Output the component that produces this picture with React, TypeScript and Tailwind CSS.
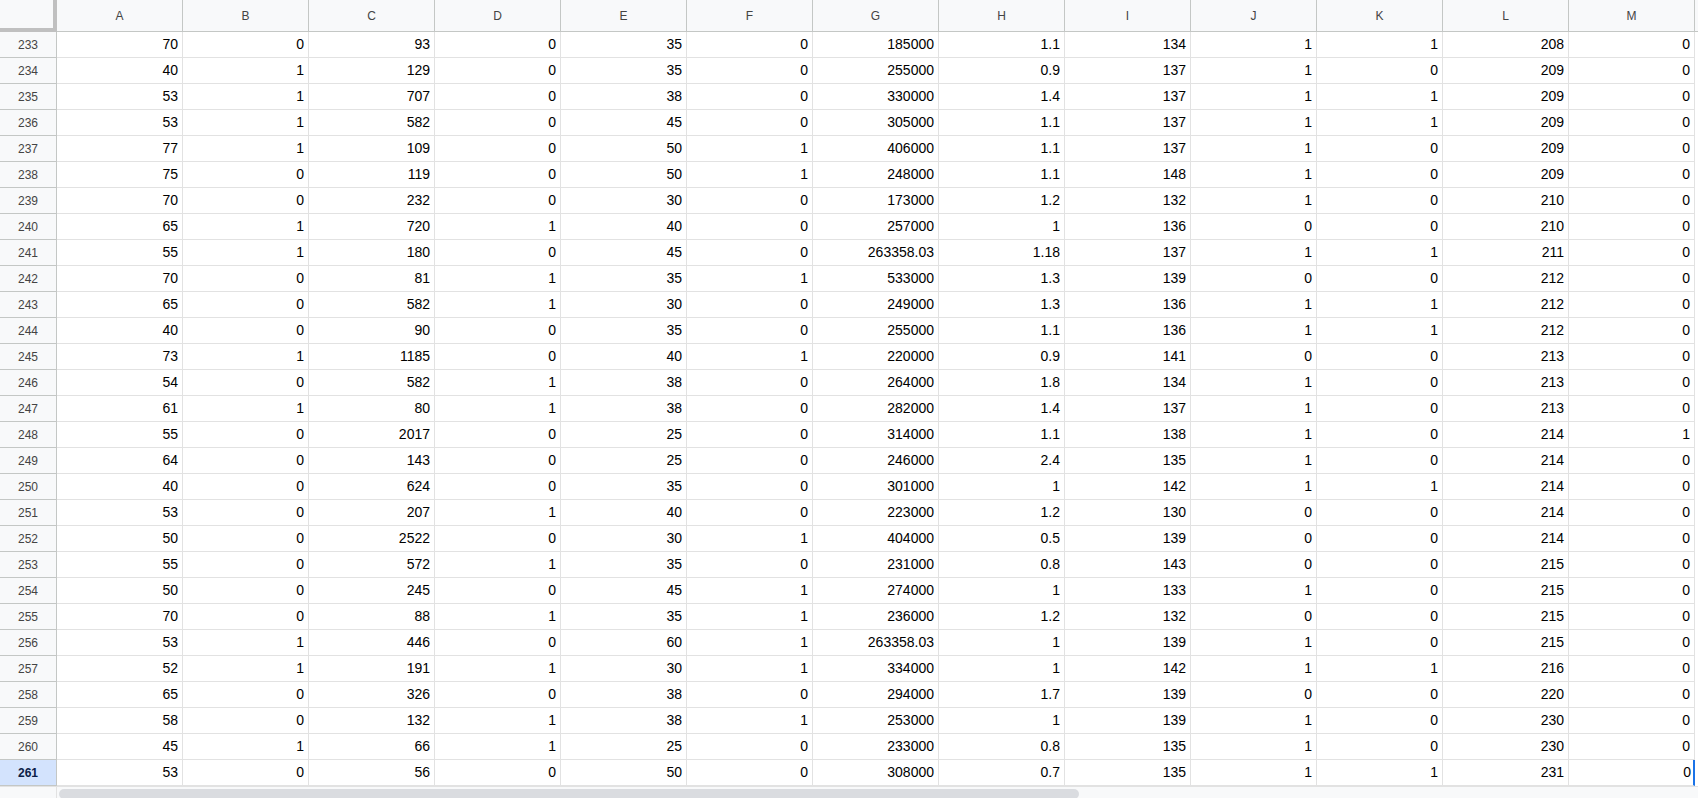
const cols = ['A', 'B', 'C', 'D', 'E', 'F', 'G', 'H', 'I', 'J', 'K', 'L', 'M'];

const data: string[] = [
  '70 0 93 0 35 0 185000 1.1 134 1 1 208 0',
  '40 1 129 0 35 0 255000 0.9 137 1 0 209 0',
  '53 1 707 0 38 0 330000 1.4 137 1 1 209 0',
  '53 1 582 0 45 0 305000 1.1 137 1 1 209 0',
  '77 1 109 0 50 1 406000 1.1 137 1 0 209 0',
  '75 0 119 0 50 1 248000 1.1 148 1 0 209 0',
  '70 0 232 0 30 0 173000 1.2 132 1 0 210 0',
  '65 1 720 1 40 0 257000 1 136 0 0 210 0',
  '55 1 180 0 45 0 263358.03 1.18 137 1 1 211 0',
  '70 0 81 1 35 1 533000 1.3 139 0 0 212 0',
  '65 0 582 1 30 0 249000 1.3 136 1 1 212 0',
  '40 0 90 0 35 0 255000 1.1 136 1 1 212 0',
  '73 1 1185 0 40 1 220000 0.9 141 0 0 213 0',
  '54 0 582 1 38 0 264000 1.8 134 1 0 213 0',
  '61 1 80 1 38 0 282000 1.4 137 1 0 213 0',
  '55 0 2017 0 25 0 314000 1.1 138 1 0 214 1',
  '64 0 143 0 25 0 246000 2.4 135 1 0 214 0',
  '40 0 624 0 35 0 301000 1 142 1 1 214 0',
  '53 0 207 1 40 0 223000 1.2 130 0 0 214 0',
  '50 0 2522 0 30 1 404000 0.5 139 0 0 214 0',
  '55 0 572 1 35 0 231000 0.8 143 0 0 215 0',
  '50 0 245 0 45 1 274000 1 133 1 0 215 0',
  '70 0 88 1 35 1 236000 1.2 132 0 0 215 0',
  '53 1 446 0 60 1 263358.03 1 139 1 0 215 0',
  '52 1 191 1 30 1 334000 1 142 1 1 216 0',
  '65 0 326 0 38 0 294000 1.7 139 0 0 220 0',
  '58 0 132 1 38 1 253000 1 139 1 0 230 0',
  '45 1 66 1 25 0 233000 0.8 135 1 0 230 0',
  '53 0 56 0 50 0 308000 0.7 135 1 1 231 0',
];

export default function App() {
  return (
    <div
      className="w-[1698px] h-[798px] overflow-hidden bg-white flex flex-col"
      style={{ fontFamily: '"Liberation Sans", Arial, sans-serif' }}
    >
      {/* column headers */}
      <div className="flex h-[32px] shrink-0">
        <div className="w-[57px] shrink-0 bg-[#f8f9fa] border-r-[4px] border-b-[4px] border-[#c0c0c0]" />
        {cols.map((c) => (
          <div
            key={c}
            className="w-[126px] shrink-0 flex items-center justify-center text-[12px] text-[#444] bg-[#f8f9fa] border-r border-b border-[#c4c7c5]"
          >
            {c}
          </div>
        ))}
        <div className="flex-1 bg-[#f8f9fa] border-b border-[#c4c7c5]" />
      </div>

      {data.map((row, i) => {
        const n = 233 + i;
        const selected = n === 261;
        const vals = row.split(' ');
        return (
          <div key={n} className="flex h-[26px] shrink-0">
            <div
              className={
                selected
                  ? 'w-[57px] shrink-0 flex items-center justify-center text-[12px] font-bold text-[#0b1d47] bg-[#d3e3fd] border-r border-b border-[#c4c7c5]'
                  : 'w-[57px] shrink-0 flex items-center justify-center text-[12px] text-[#444] bg-[#f8f9fa] border-r border-b border-[#c4c7c5]'
              }
            >
              {n}
            </div>
            {vals.map((v, j) => (
              <div
                key={j}
                className={
                  selected && j === 12
                    ? 'w-[126px] shrink-0 flex items-end justify-end pr-[2px] pb-[2px] text-[14px] text-black border-r-2 border-b border-[#e2e2e2] border-r-[#1a73e8]'
                    : 'w-[126px] shrink-0 flex items-end justify-end pr-[4px] pb-[2px] text-[14px] text-black border-r border-b border-[#e2e2e2]'
                }
              >
                {v}
              </div>
            ))}
          </div>
        );
      })}

      {/* horizontal scrollbar */}
      <div className="flex flex-1 border-t border-[#e2e2e2]">
        <div className="w-[57px] bg-[#f8f9fa] border-r border-[#e2e2e2]" />
        <div className="flex-1 bg-[#f8f9fa] px-[2px] pt-[2px]">
          <div className="w-[1020px] h-[10px] rounded-full bg-[#dadce0]" />
        </div>
      </div>
    </div>
  );
}
